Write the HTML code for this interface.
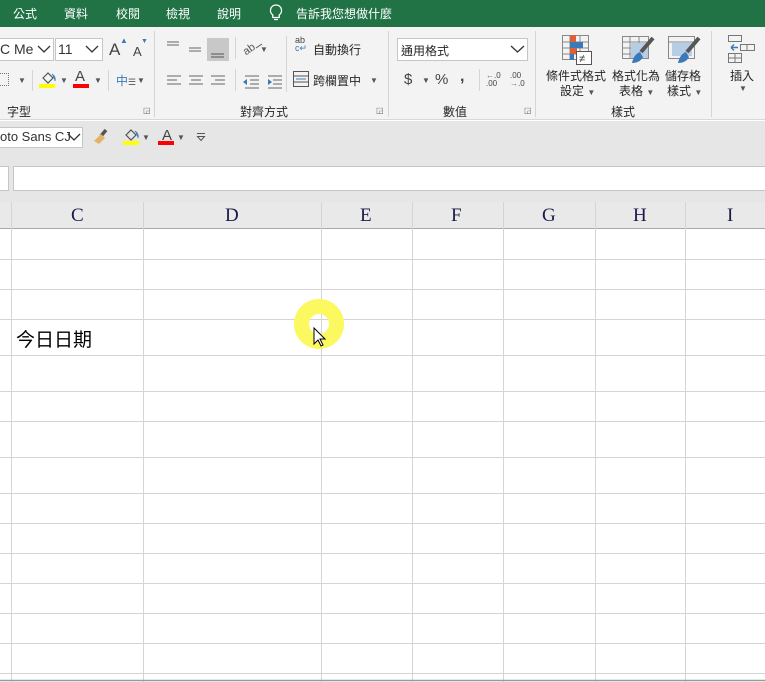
<!DOCTYPE html>
<html><head><meta charset="utf-8"><style>
*{margin:0;padding:0;box-sizing:border-box}
body{width:765px;height:682px;overflow:hidden;position:relative;background:#fff;font-family:"Liberation Sans","Noto Sans CJK TC",sans-serif;color:#222}
.a{position:absolute;white-space:nowrap}
.t{font-size:12px;color:#262626}
.tab{color:#fff;font-size:12px;top:5px}
.sep{position:absolute;width:1px;background:#d5d5d5}
.hdr{font-family:"Liberation Serif",serif;font-size:19px;color:#1a1a4a;top:205px}
.arr{font-size:8px;color:#555}
</style></head><body>
<div class="a" style="left:0;top:0;width:765px;height:27px;background:#217346"></div>
<div class="a tab" style="left:13px">公式</div>
<div class="a tab" style="left:64px">資料</div>
<div class="a tab" style="left:116px">校閱</div>
<div class="a tab" style="left:166px">檢視</div>
<div class="a tab" style="left:217px">說明</div>
<svg class="a" style="left:269px;top:4px" width="14" height="18" viewBox="0 0 14 18"><path d="M7 1a5.5 5.5 0 0 0-3.2 10v2.5h6.4V11A5.5 5.5 0 0 0 7 1z M5 15.5h4" fill="none" stroke="#fff" stroke-width="1.3"/></svg>
<div class="a tab" style="left:296px">告訴我您想做什麼</div>
<div class="a" style="left:0;top:27px;width:765px;height:93px;background:#f3f3f3;border-bottom:1px solid #d8d8d8"></div>
<div class="sep" style="left:154px;top:31px;height:86px"></div>
<div class="sep" style="left:388px;top:31px;height:86px"></div>
<div class="sep" style="left:535px;top:31px;height:86px"></div>
<div class="sep" style="left:711px;top:31px;height:86px"></div>
<div class="a" style="left:-2px;top:38px;width:56px;height:23px;background:#fff;border:1px solid #c6c6c6"></div>
<div class="a" style="left:0;top:41px;font-size:14px;color:#333">C Me</div>
<svg class="a" style="left:37px;top:45px" width="14" height="9"><path d="M1 1l6 6 6-6" fill="none" stroke="#333" stroke-width="1.3"/></svg>
<div class="a" style="left:55px;top:38px;width:48px;height:23px;background:#fff;border:1px solid #c6c6c6"></div>
<div class="a" style="left:58px;top:41px;font-size:14px;color:#333">11</div>
<svg class="a" style="left:85px;top:45px" width="14" height="9"><path d="M1 1l6 6 6-6" fill="none" stroke="#333" stroke-width="1.3"/></svg>
<div class="a" style="left:109px;top:40px;font-size:17px;color:#444">A</div>
<div class="a" style="left:120px;top:36px;font-size:8px;color:#3b79b8">▲</div>
<div class="a" style="left:133px;top:44px;font-size:13px;color:#444">A</div>
<div class="a" style="left:141px;top:38px;font-size:7px;color:#3b79b8">▼</div>
<div class="a" style="left:-1px;top:73px;width:10px;height:13px;border:1px dotted #777"></div>
<div class="a arr" style="left:18px;top:76px">▼</div>
<div class="sep" style="left:32px;top:70px;height:21px"></div>
<svg class="a" style="left:40px;top:70px" width="18" height="15"><path d="M3 8l5-5 5 5-5 5z" fill="none" stroke="#555" stroke-width="1.2"/><path d="M12 4q4 3 3 7" fill="#3b79b8" stroke="#3b79b8"/></svg>
<div class="a" style="left:39px;top:84px;width:16px;height:4px;background:#ffff00"></div>
<div class="a arr" style="left:60px;top:76px">▼</div>
<div class="a" style="left:75px;top:68px;font-size:15px;color:#444">A</div>
<div class="a" style="left:73px;top:84px;width:16px;height:4px;background:#f00"></div>
<div class="a arr" style="left:94px;top:76px">▼</div>
<div class="sep" style="left:108px;top:70px;height:21px"></div>
<div class="a" style="left:116px;top:72px;font-size:12px;color:#3b79b8">中<span style="font-size:9px;color:#555">☰</span></div>
<div class="a arr" style="left:137px;top:76px">▼</div>
<div class="a t" style="left:7px;top:103px">字型</div>
<div class="a" style="left:143px;top:106px;font-size:8px;color:#666">◲</div>
<svg class="a" style="left:160px;top:36px" width="240" height="60">
<g stroke="#666" stroke-width="1">
<path d="M7 6h12M7 9h12"/><path d="M29 12h12M29 15h12"/>
</g>
<rect x="47" y="2" width="22" height="23" fill="#c8c8c8"/>
<g stroke="#555"><path d="M51 18h13M51 21h13"/></g>
<g stroke="#666"><path d="M7 40h14M7 44h10M7 48h14"/><path d="M29 40h14M31 44h10M29 48h14"/><path d="M51 40h14M55 44h10M51 48h14"/>
<path d="M85 40h14M90 44h9M90 48h9M85 52h14"/><path d="M108 40h14M113 44h9M113 48h9M108 52h14"/></g>
<path d="M83 46l4-3v6z" fill="#3b79b8"/><path d="M112 46l-4-3v6z" fill="#3b79b8"/>
<text x="82" y="17" font-size="11" fill="#555" transform="rotate(-35 88 12)" font-family="Liberation Sans">ab</text>
<path d="M96 12l6-4" stroke="#555"/>
</svg>
<div class="a arr" style="left:260px;top:45px">▼</div>
<div class="sep" style="left:235px;top:37px;height:22px"></div>
<div class="sep" style="left:235px;top:69px;height:22px"></div>
<div class="sep" style="left:286px;top:36px;height:56px"></div>
<div class="a" style="left:295px;top:36px;font-size:9px;line-height:8px;color:#444">ab<br><span style="color:#3b79b8">c↵</span></div>
<div class="a t" style="left:313px;top:41px">自動換行</div>
<svg class="a" style="left:293px;top:71px" width="16" height="16"><rect x="0.5" y="0.5" width="15" height="15" fill="none" stroke="#555"/><path d="M0 5h16M0 11h16" stroke="#555"/><path d="M3 8h10" stroke="#3b79b8"/></svg>
<div class="a t" style="left:313px;top:72px">跨欄置中</div>
<div class="a arr" style="left:370px;top:76px">▼</div>
<div class="a t" style="left:240px;top:103px">對齊方式</div>
<div class="a" style="left:376px;top:106px;font-size:8px;color:#666">◲</div>
<div class="a" style="left:397px;top:38px;width:131px;height:23px;background:#fff;border:1px solid #c6c6c6"></div>
<div class="a t" style="left:401px;top:42px">通用格式</div>
<svg class="a" style="left:510px;top:45px" width="15" height="9"><path d="M1 1l6.5 6 6.5-6" fill="none" stroke="#333" stroke-width="1.3"/></svg>
<div class="a" style="left:404px;top:71px;font-size:15px;color:#444">$</div>
<div class="a arr" style="left:422px;top:76px">▼</div>
<div class="a" style="left:435px;top:71px;font-size:15px;color:#444">%</div>
<div class="a" style="left:460px;top:68px;font-size:16px;color:#444;font-weight:bold">,</div>
<div class="sep" style="left:479px;top:69px;height:22px"></div>
<div class="a" style="left:486px;top:72px;font-size:8px;line-height:8px;color:#444"><span style="color:#3b79b8">←</span>.0<br>.00</div>
<div class="a" style="left:510px;top:72px;font-size:8px;line-height:8px;color:#444">.00<br><span style="color:#3b79b8">→</span>.0</div>
<div class="a t" style="left:443px;top:103px">數值</div>
<div class="a" style="left:524px;top:106px;font-size:8px;color:#666">◲</div>
<svg class="a" style="left:560px;top:33px" width="200" height="33">
<g fill="none" stroke="#888"><rect x="2.5" y="2.5" width="26" height="24"/><path d="M2 9h27M2 15h27M2 21h27M10 2v25M20 2v25"/></g>
<rect x="10" y="2" width="6" height="7" fill="#d9613b"/><rect x="10" y="9" width="13" height="6" fill="#3b79b8"/><rect x="10" y="15" width="7" height="6" fill="#d9613b"/><rect x="10" y="21" width="4" height="6" fill="#3b79b8"/>
<rect x="16.5" y="18.5" width="15" height="13" fill="#fff" stroke="#555"/><text x="19" y="29" font-size="11" fill="#333">≠</text>
<g fill="none" stroke="#888"><rect x="62.5" y="3.5" width="26" height="22"/><path d="M62 9h27M62 15h27M62 21h27M70 3v23M79 3v23"/></g>
<rect x="71" y="10" width="17" height="15" fill="#b7cde5"/>
<path d="M93 5l-12 14" stroke="#555" stroke-width="4"/><path d="M80 19q-6 2-8 11q8 0 11-6z" fill="#3b79b8"/>
<g fill="none" stroke="#888"><rect x="108.5" y="3.5" width="26" height="22"/><path d="M108 9h27"/></g>
<rect x="112" y="10" width="20" height="13" fill="#b7cde5"/>
<path d="M139 5l-12 14" stroke="#555" stroke-width="4"/><path d="M126 19q-6 2-8 11q8 0 11-6z" fill="#3b79b8"/>
</svg>
<div class="a t" style="left:546px;top:67px">條件式格式</div>
<div class="a t" style="left:560px;top:82px">設定 <span class="arr">▼</span></div>
<div class="a t" style="left:612px;top:67px">格式化為</div>
<div class="a t" style="left:619px;top:82px">表格 <span class="arr">▼</span></div>
<div class="a t" style="left:665px;top:67px">儲存格</div>
<div class="a t" style="left:667px;top:82px">樣式 <span class="arr">▼</span></div>
<div class="a t" style="left:611px;top:103px">樣式</div>
<svg class="a" style="left:726px;top:34px" width="32" height="30"><g fill="none" stroke="#777"><rect x="2.5" y="1.5" width="13" height="6"/><rect x="14.5" y="10.5" width="14" height="6"/><path d="M21 10v7"/><rect x="2.5" y="19.5" width="13" height="9"/><path d="M9 19v10M2 24h14"/></g><path d="M5 13.5h7M5 13.5l3-3M5 13.5l3 3" stroke="#3b79b8" stroke-width="1.4" fill="none"/></svg>
<div class="a t" style="left:730px;top:67px">插入</div>
<div class="a arr" style="left:739px;top:84px">▼</div>
<div class="a" style="left:0;top:121px;width:765px;height:81px;background:#e6e6e6"></div>
<div class="a" style="left:-2px;top:127px;width:85px;height:21px;background:#fff;border:1px solid #c6c6c6"></div>
<div class="a" style="left:0;top:129px;font-size:13px;color:#333">oto Sans CJ</div>
<svg class="a" style="left:67px;top:133px" width="14" height="9"><path d="M1 1l6 6 6-6" fill="none" stroke="#333" stroke-width="1.3"/></svg>
<svg class="a" style="left:93px;top:128px" width="18" height="18"><path d="M13 2l-5 6" stroke="#555" stroke-width="3.5"/><path d="M8 6l4 4-6 6-5-3z" fill="#e4b36a"/></svg>
<svg class="a" style="left:123px;top:128px" width="18" height="14"><path d="M3 7l5-5 5 5-5 5z" fill="none" stroke="#555" stroke-width="1.2"/><path d="M12 3q4 3 3 7" fill="#3b79b8" stroke="#3b79b8"/></svg>
<div class="a" style="left:123px;top:141px;width:16px;height:4px;background:#ffff00"></div>
<div class="a arr" style="left:142px;top:133px">▼</div>
<div class="a" style="left:162px;top:127px;font-size:15px;color:#444">A</div>
<div class="a" style="left:158px;top:141px;width:16px;height:4px;background:#f00"></div>
<div class="a arr" style="left:177px;top:133px">▼</div>
<svg class="a" style="left:195px;top:131px" width="12" height="12"><path d="M2 2.5h8" stroke="#555"/><path d="M2.5 5.5h7l-3.5 4z" fill="none" stroke="#555"/></svg>
<div class="a" style="left:-2px;top:166px;width:11px;height:25px;background:#fff;border:1px solid #c6c6c6"></div>
<div class="a" style="left:13px;top:166px;width:755px;height:25px;background:#fff;border:1px solid #c6c6c6"></div>
<div class="a" style="left:0;top:202px;width:765px;height:27px;background:#e9e9e9;border-bottom:1px solid #a9a9a9"></div>
<div class="a hdr" style="left:71px">C</div>
<div class="a hdr" style="left:225px">D</div>
<div class="a hdr" style="left:360px">E</div>
<div class="a hdr" style="left:451px">F</div>
<div class="a hdr" style="left:542px">G</div>
<div class="a hdr" style="left:633px">H</div>
<div class="a hdr" style="left:727px">I</div>
<svg class="a" style="left:0;top:0" width="765" height="682">
<g stroke="#d4d4d4" stroke-width="1">
<path d="M11.5 202V682M143.5 202V682M321.5 202V682M412.5 202V682M503.5 202V682M595.5 202V682M685.5 202V682"/>
<path d="M0 259.5H765M0 289.5H765M0 319.5H765M0 355.5H765M0 391.5H765M0 421.5H765M0 457.5H765M0 493.5H765M0 523.5H765M0 553.5H765M0 583.5H765M0 613.5H765M0 643.5H765M0 673.5H765"/>
</g>
<path d="M0 680.5H765" stroke="#999" stroke-width="1.5"/>
<circle cx="319" cy="324" r="17.5" fill="none" stroke="#fbf860" stroke-width="15"/>
<path d="M314 328v16l4-4 3 6 2-1-3-6h5z" fill="#fff" stroke="#000" stroke-width="1"/>
</svg>
<div class="a" style="left:16px;top:325px;font-size:19px;color:#000">今日日期</div>
</body></html>
